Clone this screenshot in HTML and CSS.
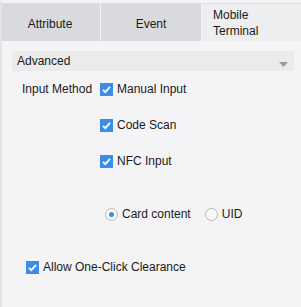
FILE: index.html
```html
<!DOCTYPE html>
<html>
<head>
<meta charset="utf-8">
<link rel="stylesheet" href="styles.css">
</head>
<body>
<div class="panel">
  <div class="tabs">
    <div class="tab">Attribute</div>
    <div class="tab">Event</div>
    <div class="tab active"><span class="tab-text">Mobile Terminal</span></div>
  </div>
  <div class="content">
    <div class="select">
      <span>Advanced</span>
      <svg class="arrow" width="9" height="5" viewBox="0 0 9 5"><path d="M0 0H9L4.5 5Z" fill="#9a9a9a"/></svg>
    </div>
    <div class="form">
      <div class="row">
        <div class="label">Input Method</div>
        <div class="checks">
          <label class="check"><span class="box"><svg width="13" height="13" viewBox="0 0 13 13"><path d="M3 6.8L5.3 9.2L10 3.8" stroke="#fff" stroke-width="1.8" fill="none"/></svg></span>Manual Input</label>
          <label class="check"><span class="box"><svg width="13" height="13" viewBox="0 0 13 13"><path d="M3 6.8L5.3 9.2L10 3.8" stroke="#fff" stroke-width="1.8" fill="none"/></svg></span>Code Scan</label>
          <label class="check"><span class="box"><svg width="13" height="13" viewBox="0 0 13 13"><path d="M3 6.8L5.3 9.2L10 3.8" stroke="#fff" stroke-width="1.8" fill="none"/></svg></span>NFC Input</label>
        </div>
      </div>
      <div class="radios">
        <label class="radio"><span class="circle on"></span>Card content</label>
        <label class="radio"><span class="circle"></span>UID</label>
      </div>
      <label class="check allow"><span class="box"><svg width="13" height="13" viewBox="0 0 13 13"><path d="M3 6.8L5.3 9.2L10 3.8" stroke="#fff" stroke-width="1.8" fill="none"/></svg></span>Allow One-Click Clearance</label>
    </div>
  </div>
</div>
</body>
</html>
```

FILE: styles.css
```css
html, body {
  margin: 0;
  padding: 0;
}
body {
  font-family: "Liberation Sans", Arial, sans-serif;
  font-size: 12px;
  color: #1a1a1a;
  background: #f4f4f6;
}
.panel {
  width: 301px;
  height: 307px;
  box-sizing: border-box;
  border-left: 2px solid #e4e4e6;
  border-top: 3px solid #f3f3f5;
  overflow: hidden;
}
.tabs {
  display: flex;
  height: 37px;
  border-top: 1px solid #e2e2e4;
  margin-left: -2px;
}
.tab {
  width: 101px;
  background: #d9dadd;
  display: flex;
  align-items: center;
  justify-content: center;
  border-right: 1px solid #f2f2f4;
  line-height: 16px;
  padding-top: 2px;
  box-sizing: border-box;
}
.tab.active {
  background: #eeeef0;
  justify-content: flex-start;
  padding: 0 0 0 11px;
  border-right: none;
  flex: 1;
  width: auto;
}
.tab-text {
  width: 60px;
}
.content {
  padding: 10px 7px 0 10px;
}
.select {
  height: 20px;
  background: #ebebeb;
  display: flex;
  align-items: center;
  justify-content: space-between;
  padding: 0 6px 0 5px;
}
.select span {
  padding-bottom: 1px;
}
.arrow {
  margin-top: 6px;
}
.form {
  padding-top: 11px;
}
.row {
  display: flex;
}
.label {
  width: 78px;
  padding-left: 10px;
  line-height: 14px;
}
.checks {
  display: flex;
  flex-direction: column;
  gap: 22px;
}
.check {
  display: flex;
  align-items: center;
  line-height: 14px;
  height: 14px;
}
.box {
  width: 13px;
  height: 13px;
  background: #3b8ee8;
  margin-right: 4px;
  display: inline-block;
}
.box svg {
  display: block;
}
.radios {
  display: flex;
  margin-top: 39px;
  padding-left: 93px;
  gap: 14px;
}
.radio {
  display: flex;
  align-items: center;
  line-height: 14px;
}
.circle {
  width: 11px;
  height: 11px;
  border: 1px solid #b9b9b9;
  border-radius: 50%;
  background: #f8f8f8;
  margin-right: 4px;
  position: relative;
  box-sizing: content-box;
}
.circle.on::after {
  content: "";
  position: absolute;
  left: 3px;
  top: 3px;
  width: 5px;
  height: 5px;
  border-radius: 50%;
  background: #3b8ee8;
}
.allow {
  margin-top: 39px;
  padding-left: 14px;
}
```
